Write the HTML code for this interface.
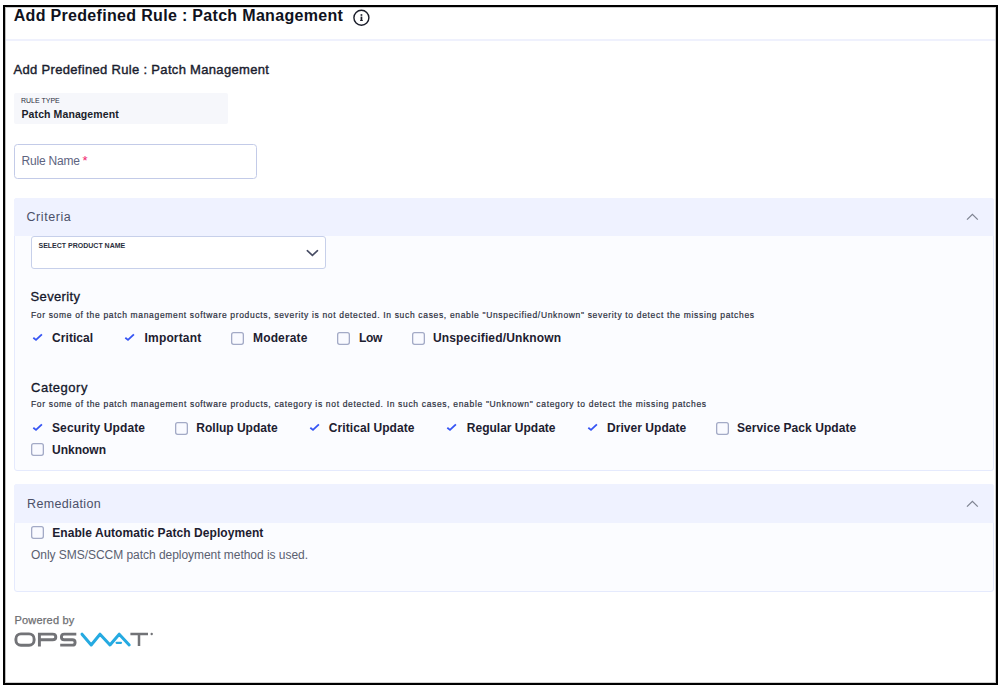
<!DOCTYPE html>
<html>
<head>
<meta charset="utf-8">
<style>
html,body{margin:0;padding:0;background:#fff;}
body{width:999px;height:688px;position:relative;overflow:hidden;font-family:"Liberation Sans",sans-serif;color:#1b1e2b;font-size:12px;line-height:1;}
.abs{position:absolute;white-space:nowrap;line-height:1;margin:0;padding:0;}
#frame{position:absolute;left:3px;top:5px;width:995px;height:680px;border:2px solid #000;box-sizing:border-box;}
#frame2{position:absolute;left:5px;top:7px;width:991px;height:676px;box-sizing:border-box;border-left:1px solid rgba(0,0,0,0.25);border-top:1px solid rgba(0,0,0,0.2);border-right:1px solid rgba(0,0,0,0.22);border-bottom:1px solid rgba(0,0,0,0.18);}
#title{left:13.7px;top:8px;font-size:16px;font-weight:bold;color:#0f1220;letter-spacing:0.32px;}
#sep{position:absolute;left:6px;top:39px;width:989px;height:2px;background:#eff1fd;}
#sub{left:13.5px;top:63px;font-size:13px;color:#1a1d2e;letter-spacing:0.32px;-webkit-text-stroke:0.4px #1a1d2e;}
#rtbox{position:absolute;left:14px;top:93px;width:214px;height:31px;background:#f6f7fb;border-radius:2px;}
#rtlabel{left:21px;top:97px;font-size:7px;color:#2a2e3c;}
#rtval{left:21.5px;top:108.5px;font-size:10.5px;font-weight:bold;color:#1a1d2a;letter-spacing:0.1px;}
#rnbox{position:absolute;left:14px;top:144px;width:243px;height:35px;border:1px solid #c3cbe8;border-radius:3.5px;background:#fff;box-sizing:border-box;}
#rn{left:21.6px;top:154px;font-size:12px;color:#5d6480;letter-spacing:-0.2px;}
#rn span{color:#f0246e;font-size:13px;margin-left:-0.5px;}
.panel{position:absolute;left:14px;width:980px;background:#fbfcff;border:1px solid #e5eafd;border-radius:3px;box-sizing:border-box;}
.phead{position:absolute;left:14px;width:980px;background:#eff2ff;border-radius:3px 3px 0 0;}
.ptitle{font-size:12.5px;color:#4b5068;}
#selbox{position:absolute;left:31px;top:236px;width:295px;height:33px;border:1px solid #c7d0ea;border-radius:3px;background:#fff;box-sizing:border-box;}
#sellabel{left:38.5px;top:242px;font-size:7px;color:#2a2e3c;font-weight:bold;}
.h{font-size:13px;color:#14172a;-webkit-text-stroke:0.3px #14172a;}
.d{font-size:8.5px;color:#2c3040;-webkit-text-stroke:0.2px #2c3040;}
.lb{font-size:12px;font-weight:bold;color:#1d2030;}
.ck{position:absolute;}
</style>
</head>
<body>
<div id="frame"></div><div id="frame2"></div>
<div id="title" class="abs">Add Predefined Rule : Patch Management</div>
<svg class="ck" style="left:352px;top:9px" width="18" height="18" viewBox="0 0 18 18"><circle cx="9.4" cy="8.7" r="7.5" fill="none" stroke="#1a1d2a" stroke-width="1.4"/><rect x="8.6" y="7.6" width="1.7" height="4.3" fill="#1a1d2a"/><rect x="8.1" y="11.1" width="2.7" height="0.9" fill="#1a1d2a"/><rect x="8.6" y="5.2" width="1.7" height="1.6" fill="#1a1d2a"/></svg>
<div id="sep"></div>
<div id="sub" class="abs">Add Predefined Rule : Patch Management</div>
<div id="rtbox"></div>
<div id="rtlabel" class="abs">RULE TYPE</div>
<div id="rtval" class="abs">Patch Management</div>
<div id="rnbox"></div>
<div id="rn" class="abs">Rule Name <span>*</span></div>

<div class="panel" style="top:198px;height:273px;"></div>
<div class="phead" style="top:198px;height:38px;"></div>
<div class="abs ptitle" style="left:26.5px;top:210.5px;letter-spacing:0.56px;">Criteria</div>
<svg class="ck" style="left:966px;top:212px" width="13" height="9" viewBox="0 0 13 9"><path d="M1 7.6 L6.4 2.3 L11.8 7.6" fill="none" stroke="#7f8492" stroke-width="1.3"/></svg>
<div id="selbox"></div>
<div id="sellabel" class="abs">SELECT PRODUCT NAME</div>
<svg class="ck" style="left:306px;top:248.5px" width="13" height="9" viewBox="0 0 13 9"><path d="M1.3 1.7 L6.4 6.4 L11.5 1.7" fill="none" stroke="#474c63" stroke-width="1.6" stroke-linecap="round"/></svg>

<div class="abs h" style="left:30.5px;top:290px;letter-spacing:0.37px;">Severity</div>
<div class="abs d" id="d1" style="left:30.9px;top:310.6px;letter-spacing:0.665px;">For some of the patch management software products, severity is not detected. In such cases, enable "Unspecified/Unknown" severity to detect the missing patches</div>

<svg class="ck" style="left:32px;top:333px" width="12" height="9" viewBox="0 0 12 9"><path d="M1.3 4.7 L4.0 6.9 L9.9 1.3" fill="none" stroke="#3554f4" stroke-width="1.8" stroke-linecap="butt" stroke-linejoin="miter"/></svg>
<div class="abs lb" style="left:52px;top:332px;letter-spacing:0.07px;">Critical</div>
<svg class="ck" style="left:124px;top:333px" width="12" height="9" viewBox="0 0 12 9"><path d="M1.3 4.7 L4.0 6.9 L9.9 1.3" fill="none" stroke="#3554f4" stroke-width="1.8" stroke-linecap="butt" stroke-linejoin="miter"/></svg>
<div class="abs lb" style="left:144.6px;top:332px;letter-spacing:0.15px;">Important</div>
<svg class="ck" style="left:231px;top:331.6px" width="13" height="13" viewBox="0 0 13 13"><rect x="0.65" y="0.65" width="11.7" height="11.7" rx="2" fill="#f9faff" stroke="#a3aac6" stroke-width="1.3"/></svg>
<div class="abs lb" style="left:253px;top:332px;letter-spacing:0.15px;">Moderate</div>
<svg class="ck" style="left:337px;top:331.6px" width="13" height="13" viewBox="0 0 13 13"><rect x="0.65" y="0.65" width="11.7" height="11.7" rx="2" fill="#f9faff" stroke="#a3aac6" stroke-width="1.3"/></svg>
<div class="abs lb" style="left:359px;top:332px;letter-spacing:-0.3px;">Low</div>
<svg class="ck" style="left:412px;top:331.6px" width="13" height="13" viewBox="0 0 13 13"><rect x="0.65" y="0.65" width="11.7" height="11.7" rx="2" fill="#f9faff" stroke="#a3aac6" stroke-width="1.3"/></svg>
<div class="abs lb" style="left:433px;top:332px;letter-spacing:0.15px;">Unspecified/Unknown</div>

<div class="abs h" style="left:31px;top:381px;letter-spacing:0.52px;">Category</div>
<div class="abs d" id="d2" style="left:31px;top:400px;letter-spacing:0.665px;">For some of the patch management software products, category is not detected. In such cases, enable "Unknown" category to detect the missing patches</div>

<svg class="ck" style="left:32px;top:422.9px" width="12" height="9" viewBox="0 0 12 9"><path d="M1.3 4.7 L4.0 6.9 L9.9 1.3" fill="none" stroke="#3554f4" stroke-width="1.8" stroke-linecap="butt" stroke-linejoin="miter"/></svg>
<div class="abs lb" style="left:52px;top:422px;letter-spacing:0.12px;">Security Update</div>
<svg class="ck" style="left:175px;top:421.5px" width="13" height="13" viewBox="0 0 13 13"><rect x="0.65" y="0.65" width="11.7" height="11.7" rx="2" fill="#f9faff" stroke="#a3aac6" stroke-width="1.3"/></svg>
<div class="abs lb" style="left:196.3px;top:422px;letter-spacing:0px;">Rollup Update</div>
<svg class="ck" style="left:308.5px;top:422.9px" width="12" height="9" viewBox="0 0 12 9"><path d="M1.3 4.7 L4.0 6.9 L9.9 1.3" fill="none" stroke="#3554f4" stroke-width="1.8" stroke-linecap="butt" stroke-linejoin="miter"/></svg>
<div class="abs lb" style="left:328.8px;top:422px;letter-spacing:0.07px;">Critical Update</div>
<svg class="ck" style="left:446px;top:422.9px" width="12" height="9" viewBox="0 0 12 9"><path d="M1.3 4.7 L4.0 6.9 L9.9 1.3" fill="none" stroke="#3554f4" stroke-width="1.8" stroke-linecap="butt" stroke-linejoin="miter"/></svg>
<div class="abs lb" style="left:466.8px;top:422px;letter-spacing:0px;">Regular Update</div>
<svg class="ck" style="left:586.5px;top:422.9px" width="12" height="9" viewBox="0 0 12 9"><path d="M1.3 4.7 L4.0 6.9 L9.9 1.3" fill="none" stroke="#3554f4" stroke-width="1.8" stroke-linecap="butt" stroke-linejoin="miter"/></svg>
<div class="abs lb" style="left:607px;top:422px;letter-spacing:0.05px;">Driver Update</div>
<svg class="ck" style="left:716px;top:421.5px" width="13" height="13" viewBox="0 0 13 13"><rect x="0.65" y="0.65" width="11.7" height="11.7" rx="2" fill="#f9faff" stroke="#a3aac6" stroke-width="1.3"/></svg>
<div class="abs lb" style="left:737px;top:422px;letter-spacing:0.06px;">Service Pack Update</div>
<svg class="ck" style="left:31px;top:443px" width="13" height="13" viewBox="0 0 13 13"><rect x="0.65" y="0.65" width="11.7" height="11.7" rx="2" fill="#f9faff" stroke="#a3aac6" stroke-width="1.3"/></svg>
<div class="abs lb" style="left:52px;top:443.7px;letter-spacing:0px;">Unknown</div>

<div class="panel" style="top:484px;height:108px;"></div>
<div class="phead" style="top:484px;height:38.5px;"></div>
<div class="abs ptitle" style="left:27px;top:497.5px;letter-spacing:0.35px;">Remediation</div>
<svg class="ck" style="left:966px;top:499px" width="13" height="9" viewBox="0 0 13 9"><path d="M1 7.6 L6.4 2.3 L11.8 7.6" fill="none" stroke="#7f8492" stroke-width="1.3"/></svg>

<svg class="ck" style="left:31px;top:525.8px" width="13" height="13" viewBox="0 0 13 13"><rect x="0.65" y="0.65" width="11.7" height="11.7" rx="2" fill="#f9faff" stroke="#a3aac6" stroke-width="1.3"/></svg>
<div class="abs lb" style="left:52.2px;top:526.8px;letter-spacing:0.07px;">Enable Automatic Patch Deployment</div>

<div class="abs" style="left:31px;top:549.2px;font-size:12px;color:#5a6070;letter-spacing:-0.04px;">Only SMS/SCCM patch deployment method is used.</div>

<div class="abs" style="left:14.4px;top:615.4px;font-size:11px;color:#6d6e71;letter-spacing:0.2px;-webkit-text-stroke:0.25px #6d6e71;">Powered by</div>
<svg class="ck" style="left:13px;top:631px" width="144" height="18" viewBox="0 0 144 18">
<g fill="none" stroke="#727377" stroke-width="2.9">
<rect x="2.9" y="2.9" width="18.2" height="11.4" rx="5"/>
<path d="M26.4 15.6 V3.1 H39.6 Q42.8 3.1 42.8 5.95 Q42.8 8.8 39.6 8.8 H26.4"/>
<path d="M63.3 3.1 H51.2 Q48.4 3.1 48.4 5.9 Q48.4 8.7 51.2 8.7 H59.3 Q62.1 8.7 62.1 11.4 Q62.1 14.15 59.3 14.15 H47.2"/>
</g>
<path d="M117.4 3.1 H135 M126 3.1 V15" fill="none" stroke="#727377" stroke-width="2.5"/>
<path d="M69 3.2 L78.2 14 L87 3.2 L97 14 L106.2 3.2 L116.2 14" fill="none" stroke="#25aae1" stroke-width="3" stroke-linejoin="round" stroke-linecap="round"/>
<path d="M103.6 11.8 H108" fill="none" stroke="#25aae1" stroke-width="2.2" stroke-linecap="round"/>
<circle cx="138.7" cy="3" r="1.2" fill="#727377"/>
</svg>
</body>
</html>
